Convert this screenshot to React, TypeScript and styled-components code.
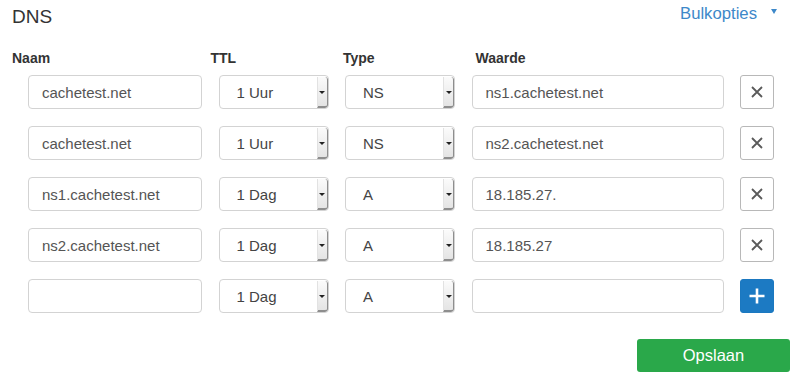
import React from 'react';
import styled, { createGlobalStyle } from 'styled-components';

const GlobalStyle = createGlobalStyle`
  html, body {
    margin: 0;
    padding: 0;
    background: #ffffff;
  }
  body {
    font-family: "Liberation Sans", Arial, sans-serif;
    color: #333333;
  }
`;

const COLUMNS = '174px 110px 110px 252px 34px';

const S = {
  Page: styled.div`
    width: 800px;
    height: 384px;
    box-sizing: border-box;
    padding: 0 10px 0 12px;
    display: flex;
    flex-direction: column;
  `,

  TopBar: styled.div`
    display: flex;
    justify-content: space-between;
    align-items: flex-start;
    height: 48px;
  `,

  Title: styled.h2`
    margin: 6px 0 0 0;
    font-size: 19px;
    line-height: 22px;
    font-weight: normal;
    color: #333333;
  `,

  BulkToggle: styled.div`
    display: flex;
    align-items: center;
    gap: 14px;
    margin: 3px 13px 0 0;
    color: #3d88c9;
    font-size: 16.7px;
    line-height: 22px;
    cursor: pointer;
  `,

  Caret: styled.span`
    width: 0;
    height: 0;
    border-left: 3px solid transparent;
    border-right: 3px solid transparent;
    border-top: 5px solid #3d88c9;
    margin-top: -6px;
  `,

  HeaderRow: styled.div`
    display: grid;
    grid-template-columns: ${COLUMNS};
    column-gap: 16.5px;
    margin-left: 16px;
    margin-bottom: 7px;
  `,

  Label: styled.div<{ $offset: number }>`
    margin-left: ${(p) => p.$offset}px;
    font-size: 14px;
    line-height: 20px;
    font-weight: bold;
    color: #333333;
    white-space: nowrap;
  `,

  Rows: styled.div`
    display: flex;
    flex-direction: column;
    gap: 17px;
    margin-left: 16px;
  `,

  Row: styled.div`
    display: grid;
    grid-template-columns: ${COLUMNS};
    column-gap: 16.5px;
    height: 34px;
  `,

  Input: styled.input`
    box-sizing: border-box;
    width: 100%;
    height: 34px;
    margin: 0;
    padding: 0 13px;
    border: 1px solid #d3d3d3;
    border-radius: 4px;
    font-family: inherit;
    font-size: 15px;
    color: #555555;
    background: #ffffff;
    outline: none;
  `,

  Select: styled.div`
    box-sizing: border-box;
    height: 34px;
    display: flex;
    border: 1px solid #d3d3d3;
    border-radius: 4px;
    background: #ffffff;
    overflow: hidden;
  `,

  SelectValue: styled.span`
    flex: 1;
    padding-left: 17px;
    font-size: 15px;
    line-height: 33px;
    color: #444444;
  `,

  SelectArrow: styled.span`
    box-sizing: border-box;
    width: 11px;
    display: flex;
    align-items: center;
    justify-content: center;
    background: linear-gradient(#fbfbfb, #e4e4e4);
    border-left: 1px solid #e2e2e2;
    border-right: 1px solid #8e8e8e;
    border-bottom: 2px solid #8e8e8e;
    border-top-right-radius: 3px;
    border-bottom-right-radius: 3px;
    margin: 1px 0 0 0;

    &::after {
      content: '';
      width: 0;
      height: 0;
      border-left: 3px solid transparent;
      border-right: 3px solid transparent;
      border-top: 3px solid #222222;
      margin-top: 1px;
    }
  `,

  IconButton: styled.button<{ $primary?: boolean }>`
    box-sizing: border-box;
    width: 34px;
    height: 34px;
    margin: 0;
    padding: 0;
    display: flex;
    align-items: center;
    justify-content: center;
    border-radius: 3px;
    border: 1px solid ${(p) => (p.$primary ? '#1b78c0' : '#b8b8b8')};
    background: ${(p) => (p.$primary ? '#1c7ac3' : '#ffffff')};
    cursor: pointer;
  `,

  Footer: styled.div`
    display: flex;
    justify-content: flex-end;
    margin-top: 26px;
  `,

  SaveButton: styled.button`
    width: 153px;
    height: 33px;
    border: none;
    border-radius: 3px;
    background: #2aa84a;
    color: #ffffff;
    font-family: inherit;
    font-size: 16.5px;
    cursor: pointer;
  `,
};

interface Record {
  name: string;
  ttl: string;
  type: string;
  value: string;
}

const records: Record[] = [
  { name: 'cachetest.net', ttl: '1 Uur', type: 'NS', value: 'ns1.cachetest.net' },
  { name: 'cachetest.net', ttl: '1 Uur', type: 'NS', value: 'ns2.cachetest.net' },
  { name: 'ns1.cachetest.net', ttl: '1 Dag', type: 'A', value: '18.185.27.' },
  { name: 'ns2.cachetest.net', ttl: '1 Dag', type: 'A', value: '18.185.27' },
];

const CrossIcon = () => (
  <svg width="14" height="14" viewBox="0 0 14 14">
    <path d="M2 2 L12 12 M12 2 L2 12" stroke="#5a5a5a" strokeWidth="1.8" />
  </svg>
);

const PlusIcon = () => (
  <svg width="18" height="18" viewBox="0 0 18 18">
    <path d="M9 1.5 V16.5 M1.5 9 H16.5" stroke="#ffffff" strokeWidth="2.6" />
  </svg>
);

const FakeSelect: React.FC<{ value: string }> = ({ value }) => (
  <S.Select>
    <S.SelectValue>{value}</S.SelectValue>
    <S.SelectArrow />
  </S.Select>
);

const App: React.FC = () => {
  return (
    <>
      <GlobalStyle />
      <S.Page>
        <S.TopBar>
          <S.Title>DNS</S.Title>
          <S.BulkToggle>
            Bulkopties
            <S.Caret />
          </S.BulkToggle>
        </S.TopBar>

        <S.HeaderRow>
          <S.Label $offset={-16}>Naam</S.Label>
          <S.Label $offset={-8}>TTL</S.Label>
          <S.Label $offset={-2}>Type</S.Label>
          <S.Label $offset={4}>Waarde</S.Label>
        </S.HeaderRow>

        <S.Rows>
          {records.map((r, i) => (
            <S.Row key={i}>
              <S.Input defaultValue={r.name} />
              <FakeSelect value={r.ttl} />
              <FakeSelect value={r.type} />
              <S.Input defaultValue={r.value} />
              <S.IconButton aria-label="Verwijderen">
                <CrossIcon />
              </S.IconButton>
            </S.Row>
          ))}
          <S.Row>
            <S.Input defaultValue="" />
            <FakeSelect value="1 Dag" />
            <FakeSelect value="A" />
            <S.Input defaultValue="" />
            <S.IconButton $primary aria-label="Toevoegen">
              <PlusIcon />
            </S.IconButton>
          </S.Row>
        </S.Rows>

        <S.Footer>
          <S.SaveButton>Opslaan</S.SaveButton>
        </S.Footer>
      </S.Page>
    </>
  );
};

export default App;
